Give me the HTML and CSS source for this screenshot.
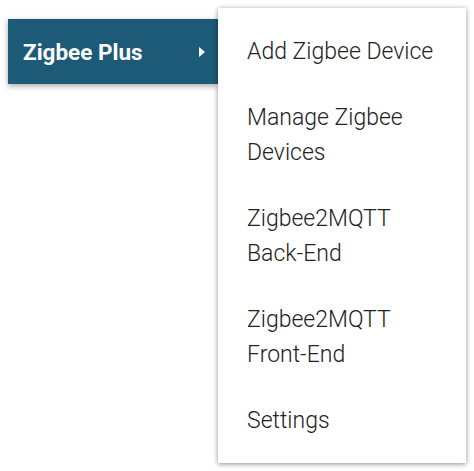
FILE: index.html
```html
<!DOCTYPE html>
<html lang="en">
<head>
  <meta charset="UTF-8">
  <title>Zigbee Plus</title>
  <link rel="stylesheet" href="styles.css">
</head>
<body>

<nav class="menu">
  <div class="menu-item active">
    <span>Zigbee Plus</span>
    <span class="caret"></span>
  </div>
  <ul class="submenu">
    <li>Add Zigbee Device</li>
    <li>Manage Zigbee<br>Devices</li>
    <li>Zigbee2MQTT<br>Back-End</li>
    <li>Zigbee2MQTT<br>Front-End</li>
    <li>Settings</li>
  </ul>
</nav>

</body>
</html>
```

FILE: styles.css
```css
* {margin:0;padding:0;box-sizing:border-box}
body {
  background:#fff;
  font-family: Roboto, 'Noto Sans', sans-serif;
}
.menu {
  display:flex;
  align-items:flex-start;
  padding:8px;
}
.menu-item {
  width:210px;
  height:65px;
  margin-top:11px;
  background:#1c5a78;
  color:#fff;
  font-weight:700;
  font-size:22.5px;
  display:flex;
  align-items:center;
  justify-content:space-between;
  padding:0 13px 0 15px;
  box-shadow:0 2px 6px rgba(0,0,0,0.35);
}
.caret {
  width:0;height:0;
  border-top:5.5px solid transparent;
  border-bottom:5.5px solid transparent;
  border-left:6px solid #fff;
}
.submenu {
  list-style:none;
  width:248px;
  background:#fff;
  padding:11px 0 10px;
  box-shadow:0 1px 5px rgba(0,0,0,0.45);
  position:relative;
  z-index:2;
}
.submenu li {
  font-size:23px;
  font-weight:300;
  line-height:35.5px;
  color:#222;
  padding:15px 29px;
}
```
